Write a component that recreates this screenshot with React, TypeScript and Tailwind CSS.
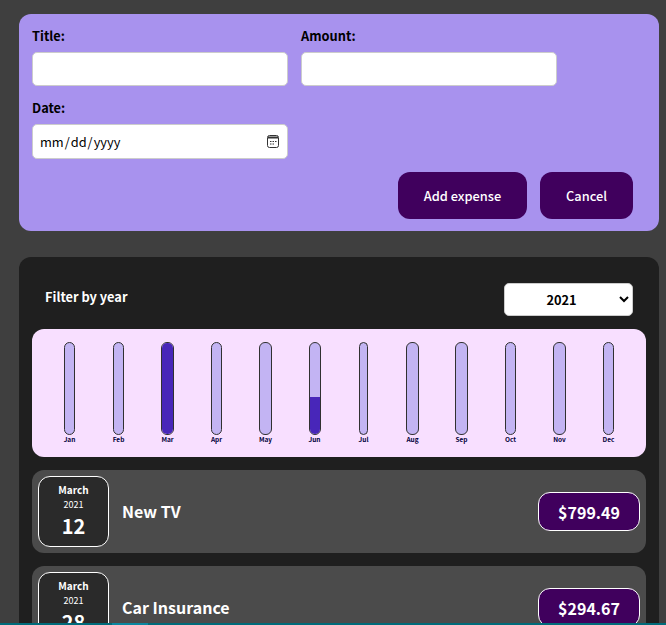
const months = ["Jan","Feb","Mar","Apr","May","Jun","Jul","Aug","Sep","Oct","Nov","Dec"];
const fills: Record<string, string> = { Mar: "h-full", Jun: "h-[41%]" };
const expenses = [
  { month: "March", year: "2021", day: "12", title: "New TV", amount: "$799.49" },
  { month: "March", year: "2021", day: "28", title: "Car Insurance", amount: "$294.67" },
];
const font = "font-['Noto_Sans_CJK_JP','Noto_Sans',sans-serif]";

function CalendarIcon() {
  return (
    <svg viewBox="0 0 12 13" className="pointer-events-none absolute top-[11px] right-[9px] h-[13px] w-[12px]" fill="none">
      <rect x="0.5" y="0.5" width="11" height="12" rx="2" stroke="#333333" />
      <path d="M1 2.5h10" stroke="#333333" strokeWidth="2" />
      <path d="M3 6.5h1.5M5.5 6.5h1.5M8 6.5h1.5M3 9h1.5M5.5 9h1.5" stroke="#333333" />
    </svg>
  );
}

export default function App() {
  const inputCls = "w-[256px] rounded-[5px] border border-[#cccccc] bg-white px-[6px] text-[12.8px] text-black";
  const labelCls = "mb-[6px] h-[20px] text-[12.8px] leading-[20px] font-bold text-black";
  return (
    <div className={`${font} relative h-[625px] overflow-hidden bg-[#3f3f3f]`}>
      <div className="ml-[19px] w-[640px] pt-[14px]">
        <form className="h-[217px] rounded-[12px] bg-[#a892ee] px-[13px] pt-[12px]">
          <div className="flex flex-wrap gap-x-[13px] gap-y-[12px]">
            <div className="flex flex-col">
              <label className={labelCls}>Title:</label>
              <input type="text" className={`${inputCls} h-[34px]`} />
            </div>
            <div className="flex flex-col">
              <label className={labelCls}>Amount:</label>
              <input type="text" className={`${inputCls} h-[34px]`} />
            </div>
            <div className="flex flex-col">
              <label className={labelCls}>Date:</label>
              <div className="relative">
                <input type="date" className={`${inputCls} h-[35px] [&::-webkit-calendar-picker-indicator]:opacity-0`} />
                <CalendarIcon />
              </div>
            </div>
          </div>
          <div className="mt-[13px] mr-[13px] flex justify-end gap-[13px]">
            <button type="button" className="h-[47px] w-[129px] rounded-[12px] bg-[#40005d] text-[12.8px] font-medium text-white">Add expense</button>
            <button type="button" className="h-[47px] w-[93px] rounded-[12px] bg-[#40005d] text-[12.8px] font-medium text-white">Cancel</button>
          </div>
        </form>

        <div className="mt-[26px] rounded-[12px] bg-[#1f1f1f] p-[13px]">
          <div className="flex items-center justify-between pt-[13px] pr-[13px] pl-[13px]">
            <span className="mb-[6px] text-[12.8px] font-bold text-white">Filter by year</span>
            <select className="h-[33px] w-[129px] rounded-[5px] border border-[#cccccc] bg-white pr-[2px] text-center text-[12.8px] font-bold text-black" defaultValue="2021">
              <option>2021</option>
            </select>
          </div>
          <div className="mt-[13px] grid h-[128px] grid-cols-12 rounded-[12px] bg-[#f8dfff] p-[13px]">
            {months.map((m) => (
              <div key={m} className="flex justify-center">
                <div className="flex w-fit flex-col">
                  <div className="flex h-[93px] w-full flex-col justify-end overflow-hidden rounded-[6px] border border-[#313131] bg-[#c3b4f3]">
                    {fills[m] && <div className={`${fills[m]} w-full bg-[#4826b9]`} />}
                  </div>
                  <span className="text-center text-[6.5px] leading-[9px] font-bold text-[#00003a]">{m}</span>
                </div>
              </div>
            ))}
          </div>
          <div className="mt-[13px] flex flex-col gap-[13px]">
            {expenses.map((e) => (
              <div key={e.title} className="flex h-[83px] items-center rounded-[12px] bg-[#4b4b4b] px-[6px]">
                <div className="flex h-[71px] w-[71px] flex-col items-center justify-center rounded-[12px] border border-white bg-[#2a2a2a] text-white">
                  <span className="mt-[-1px] mb-[1px] text-[10px] leading-[14px] font-bold">{e.month}</span>
                  <span className="text-[9px] leading-[14px]">{e.year}</span>
                  <span className="text-[20px] leading-[28px] font-bold">{e.day}</span>
                </div>
                <h2 className="mb-[2px] ml-[13px] flex-1 text-[16px] font-bold text-white">{e.title}</h2>
                <div className="flex h-[39px] w-[102px] items-center justify-center rounded-[12px] border border-white bg-[#40005d] text-[16px] font-bold text-white">{e.amount}</div>
              </div>
            ))}
          </div>
        </div>
      </div>
      <div className="absolute inset-x-0 bottom-0 h-[2px] bg-[#006b7a]">
        <div className="ml-[112px] h-full w-[36px] bg-[#0a87a0]" />
      </div>
    </div>
  );
}
